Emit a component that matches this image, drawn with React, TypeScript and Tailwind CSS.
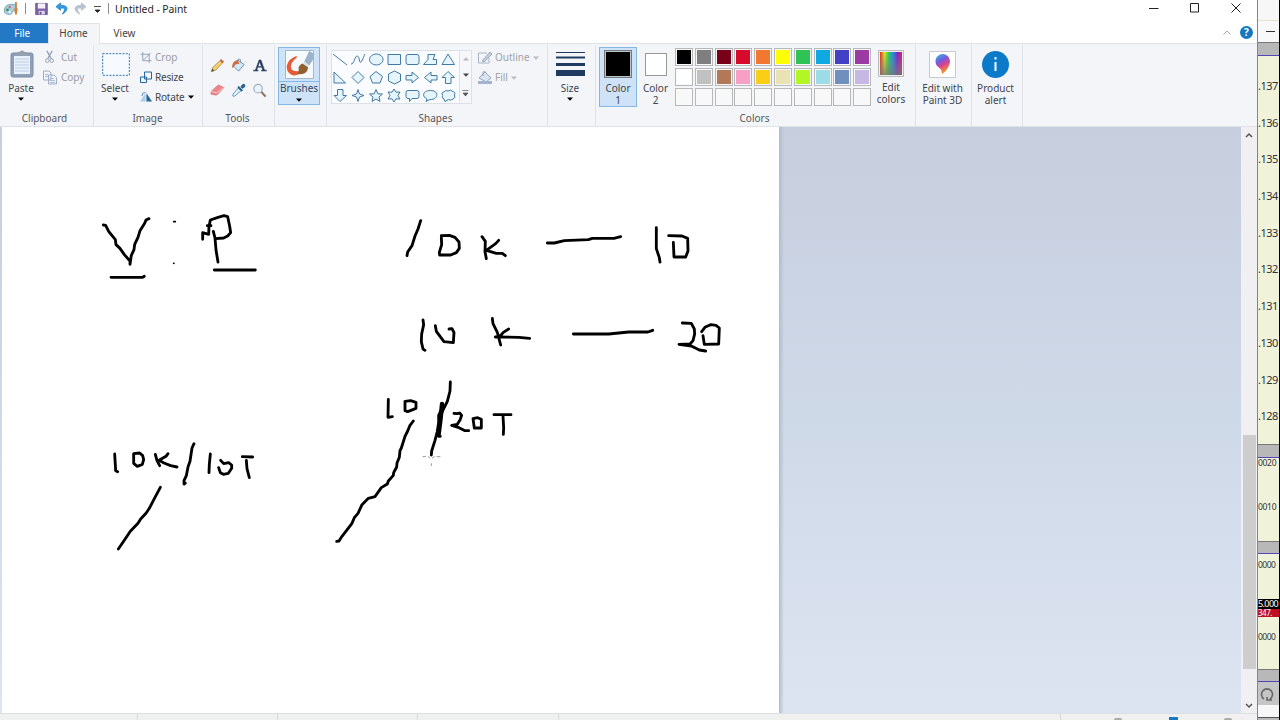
import type { ReactNode } from "react";
import clsx from "clsx";

const PRICES = [".137", ".136", ".135", ".134", ".133", ".132", ".131", ".130", ".129", ".128"];

const SWATCHES = [
  "#000000", "#7f7f7f", "#780018", "#d80a2c", "#f0782f", "#fdfd05", "#2fc356", "#10a8e0", "#4340c6", "#9a3aa2",
  "#ffffff", "#c1c1c1", "#b27857", "#f79fc4", "#f9cf16", "#e9e3b4", "#b2f725", "#9cdce6", "#6f90bd", "#c5b9e4",
  "", "", "", "", "", "", "", "", "", "",
];

const SHAPES = [
  "M1 3L15 14",
  "M1 13C4 14 5 4 7.5 5S9 13 11 11S14 4 15 3",
  "M1.5 8.5a6.8 5.5 0 1 0 13.6 0a6.8 5.5 0 1 0 -13.6 0Z",
  "M2 3.5H14.5V13.5H2Z",
  "M4 3.5H13Q15 3.5 15 5.5V11.5Q15 13.5 13 13.5H4Q2 13.5 2 11.5V5.5Q2 3.5 4 3.5Z",
  "M6 3.5H13L11 8.5H14.5V13.5H1.5L6 8.5Z",
  "M8 3L14.5 13.5H2Z",
  "M2 3V14H13.5Z",
  "M8 2.5L14 8.5L8 14.5L2 8.5Z",
  "M8 2.5L14.5 7.5L12 14H4.5L2 7.5Z",
  "M8.5 2L14.5 5V12L8.5 15L2.5 12V5Z",
  "M2 6.5H8V3L14.5 8.5L8 14V11H2Z",
  "M15 6.5H9V3L2.5 8.5L9 14V11H15Z",
  "M5.5 14.5V8.5H2L8 2.5L14.5 8.5H11V14.5Z",
  "M5.5 2.5V8.5H2L8 14.5L14.5 8.5H11V2.5Z",
  "M8 2.5L9.5 7L14 8.5L9.5 10L8 14.5L6.5 10L2 8.5L6.5 7Z",
  "M8 2.5L9.8 6.8L14.5 7L11 10L12 14.5L8 12L4 14.5L5 10L1.5 7L6.2 6.8Z",
  "M8 2L10 5.2L14 5L12 8.5L14 12L10 11.8L8 15L6 11.8L2 12L4 8.5L2 5L6 5.2Z",
  "M4 3.5H13Q15 3.5 15 5.5V9.5Q15 11.5 13 11.5H8L5.5 14.5V11.5H4Q2 11.5 2 9.5V5.5Q2 3.5 4 3.5Z",
  "M5 12L4 14.5L8 12.5C17 13 17 3 8.5 3.5C0 3.5 0 10 5 12Z",
  "M4 12Q1 11 2.5 8.5Q1 5 4 5Q5 2.5 8 4Q11 2 12.5 4.5Q16 5 14.5 8Q16 11 13 12Q11 14 8.5 12.5L5 14.5Z",
];

function Caret({ className }: { className?: string }) {
  return (
    <svg viewBox="0 0 6 4" className={clsx("h-1 w-1.5", className)}>
      <path d="M0 .5H6L3 3.8Z" fill="currentColor" />
    </svg>
  );
}

function Group({ label, className, children }: { label?: string; className: string; children?: ReactNode }) {
  return (
    <section className={clsx("flex h-[81px] shrink-0 flex-col border-r border-[#e0e3e9]", className)}>
      <div className="h-[65px] w-full shrink-0">{children}</div>
      <div className="text-center leading-[16px] text-[#55585d]">{label}</div>
    </section>
  );
}

function TitleBar() {
  return (
    <header className="flex h-[23px] items-start bg-white pt-px">
      <svg viewBox="0 0 18 18" className="ml-[3px] h-[16px] w-[17px]">
        <path d="M1 11C1 5 6 3 12 4C16 5 15 10 12 11C8 12 11 15 7 15C3 15 1 14 1 11Z" fill="#a8cfe0" stroke="#6b9db5" />
        <circle cx="4.500" cy="10" r="1.500" fill="#3f8c59" />
        <circle cx="7" cy="7" r="1.300" fill="#e05b50" />
        <circle cx="7" cy="12.500" r="1.300" fill="#fff" />
        <path d="M14 1V8M13 8L14 15L15 8" stroke="#d4803c" strokeWidth="2" fill="none" />
      </svg>
      <div className="mt-[2px] ml-[5px] h-[11px] w-px bg-[#8c8c8c]" />
      <svg viewBox="0 0 14 14" className="mt-px ml-[9px] h-[14px] w-[13px]">
        <path d="M.8 1H13.200V13H.8Z" fill="#8062a8" stroke="#69528e" />
        <path d="M3 1H11V6.500H3Z" fill="#f3f0f8" />
        <path d="M4 9H10.500V13H4Z" fill="#ded8e8" />
        <path d="M5 10H7V13H5Z" fill="#69528e" />
      </svg>
      <svg viewBox="0 0 14 14" className="ml-[7px] h-[15px] w-[13px]">
        <path d="M6 1L1 5L6 9V6.500H9Q12 7 8 13Q15 9 12 5Q10 3.500 6 3.500Z" fill="#359bdd" stroke="#2c8bd0" />
      </svg>
      <svg viewBox="0 0 14 14" className="ml-[6px] h-[15px] w-[13px]">
        <path d="M8 1L13 5L8 9V6.500H5Q2 7 6 13Q-1 9 2 5Q4 3.500 8 3.500Z" fill="#b7c3d2" stroke="#b7c3d2" />
      </svg>
      <svg viewBox="0 0 7 8" className="mt-[5px] ml-[7px] h-2 w-[7px]">
        <path d="M0 .5H7M1 4H6L3.500 6.500Z" stroke="#222" fill="#222" strokeWidth=".8" />
      </svg>
      <div className="mt-[2px] ml-[7px] h-[11px] w-px bg-[#8c8c8c]" />
      <h1 className="ml-[6px] text-[10.400px] leading-[17px] tracking-[-0.050px] text-[#252525]">Untitled - Paint</h1>
      <div className="mt-[2px] mr-[16px] ml-auto flex items-center gap-[31px] text-[#222]">
        <svg viewBox="0 0 10 10" className="h-[10px] w-[10px]"><path d="M0 5.500H9.500" stroke="currentColor" /></svg>
        <svg viewBox="0 0 10 10" className="h-[10px] w-[10px]"><path d="M.5 .5H8.500V9H.5Z" stroke="currentColor" fill="none" /></svg>
        <svg viewBox="0 0 10 10" className="h-[10px] w-[10px]"><path d="M.5 .5L9.500 9.500M9.500 .5L.5 9.500" stroke="currentColor" /></svg>
      </div>
    </header>
  );
}

function Tabs() {
  return (
    <nav className="flex h-[20px] bg-white text-[#454545]">
      <div className="w-[47.500px] bg-[#2379c5] pr-[3px] text-center leading-[20px] text-white">File</div>
      <div className="relative h-[21px] w-[52px] border-x border-t border-[#e0e3e9] bg-[#f4f5f8] text-center leading-[19px]">Home</div>
      <div className="w-[50px] text-center leading-[20px]">View</div>
      <svg viewBox="0 0 8 5" className="mt-[7px] ml-auto h-[5px] w-2"><path d="M.5 4.500L4 1L7.500 4.500" stroke="#aaa" fill="none" /></svg>
      <div className="mt-[3px] mr-[4px] ml-[9px] h-[13px] w-[13px] rounded-full bg-[#1677c0] text-center text-[10px] leading-[13px] font-bold text-white">?</div>
    </nav>
  );
}

function Clipboard() {
  return (
    <div className="flex h-full">
      <div className="flex w-[42px] flex-col items-center pt-[5px]">
        <svg viewBox="0 0 24 28" className="ml-[2px] h-[28px] w-[24px]">
          <rect x="1" y="3" width="22" height="24" rx="2" fill="#8f9fba" stroke="#7c8da9" />
          <path d="M4 6H20V24H4Z" fill="#e9f1fa" />
          <path d="M5 9H19M5 12H19M5 15H19M5 18H19M5 21H19" stroke="#b9cde6" />
          <path d="M7 2H9Q12 -1 15 2H17V6H7Z" fill="#98a1ae" />
        </svg>
        <span className="mt-[4px] leading-[13px]">Paste</span>
        <Caret className="mt-[2px] text-black" />
      </div>
      <div className="pt-[2px] text-[#9a9ca4]">
        <div className="flex h-[20px] items-center gap-[7px] pl-[3px]">
          <svg viewBox="0 0 10 14" className="h-[14px] w-[9px]">
            <path d="M2 0L7 9M8 0L3 9" stroke="#8f9bb0" strokeWidth="1.400" />
            <circle cx="2.500" cy="11" r="2" fill="none" stroke="#8f9bb0" /><circle cx="7.500" cy="11" r="2" fill="none" stroke="#8f9bb0" />
          </svg>
          Cut
        </div>
        <div className="flex h-[20px] items-center gap-[4px] pl-px">
          <svg viewBox="0 0 14 14" className="h-[15px] w-[14px]">
            <path d="M.5 .5H6L8 2.500V9.500H.5ZM5.500 4.500H11L13.500 7V13.500H5.500Z" fill="#f1f5fb" stroke="#9eaec8" />
            <path d="M2 4H5M2 6H5M7 8H11M7 10H12M7 12H12" stroke="#aebdd4" />
          </svg>
          Copy
        </div>
      </div>
    </div>
  );
}

function ImageTools() {
  return (
    <div className="flex h-full">
      <div className="flex w-[42px] flex-col items-center pt-[8px]">
        <svg viewBox="0 0 28 23" className="ml-[2px] h-[23px] w-[28px]"><rect x=".7" y=".7" width="26.600" height="21.600" fill="#f7fbff" stroke="#2f73b0" strokeDasharray="2 1.300" /></svg>
        <span className="mt-[6px] leading-[13px]">Select</span>
        <Caret className="mt-[2px] text-black" />
      </div>
      <div className="pt-[2px] pl-[4px]">
        <div className="flex h-[20px] items-center gap-[3px] text-[#9a9ca4]">
          <svg viewBox="0 0 12 12" className="h-[11px] w-[12px]"><path d="M2.500 0V9.500H12M0 2.500H9.500V12M3 9L11 1" stroke="#8d9db8" fill="none" /></svg>
          Crop
        </div>
        <div className="flex h-[20px] items-center gap-[3px] tracking-[-0.200px]">
          <svg viewBox="0 0 12 12" className="h-[12px] w-[12px]"><path d="M4.500 1H11.500V8H4.500ZM.5 6H6.500V11.500H.5Z" stroke="#27649c" fill="#eff7fd" /></svg>
          Resize
        </div>
        <div className="flex h-[20px] items-center gap-[3px] tracking-[-0.200px]">
          <svg viewBox="0 0 13 12" className="h-[12px] w-[12px]"><path d="M0 11H6V2Z" fill="#a6cdeb" /><path d="M7 2V11H13Z" fill="#276593" /><path d="M2 5Q2 1 6 1" stroke="#4382b4" fill="none" /></svg>
          Rotate
          <Caret className="text-black" />
        </div>
      </div>
    </div>
  );
}

function Tools() {
  return (
    <div className="grid grid-cols-[21px_21px_21px] grid-rows-[25px_25px] place-items-center pt-[8px] pl-[4px]">
      <svg viewBox="0 0 16 16" className="h-[15px] w-[15px]"><path d="M1.500 14.500L3 10L12 1.500L14.500 4L6 13Z" fill="#f5d06a" stroke="#9b7941" strokeWidth=".8" /><path d="M12 1.500L14.500 4L13 5.500L10.500 3Z" fill="#c5664d" /><path d="M1.500 14.500L2.500 11.500L4.500 13.500Z" fill="#444" /></svg>
      <svg viewBox="0 0 16 16" className="h-[15px] w-[15px]"><path d="M7 2L14 7L8 14L3 9Z" fill="#d5eaf7" stroke="#648eac" /><path d="M7 2Q1 3 1 11Q4 9 4 7L9 6Z" fill="#d16b43" /><path d="M10 5V1.500Q8 0 7 3" stroke="#7598b0" fill="none" /></svg>
      <svg viewBox="0 0 14 14" className="h-[13px] w-[14px]"><path d="M6 1H8L12 12H14V13H8.500V12H10L9 9H4.500L3.500 12H5V13H0V12H2ZM4.900 8H8.500L6.600 3Z" fill="#22395b" stroke="#22395b" strokeWidth=".5" fillRule="evenodd" /></svg>
      <svg viewBox="0 0 16 14" className="h-[13px] w-[15px]"><path d="M1 8L9 1L15 4L7 12L1 11Z" fill="#ed858c" stroke="#c96d74" strokeWidth=".7" /><path d="M1 8L7 9.500L15 4" stroke="#ffd0d1" fill="none" /></svg>
      <svg viewBox="0 0 16 16" className="h-[15px] w-[15px]"><path d="M8 5L11 8L4 14L2 14L2 12Z" fill="#dceefb" stroke="#6e97b5" /><path d="M8 3L13 8L11 9L7 5ZM10 4L12 1.500Q14 0 15 2Q16 3 14 5L12 6Z" fill="#286291" /></svg>
      <svg viewBox="0 0 16 16" className="h-[15px] w-[15px]"><circle cx="6.500" cy="6" r="4.500" fill="#e8f5ff" stroke="#a5afb9" strokeWidth="1.300" /><path d="M10 9.500L14.500 14.500" stroke="#8d7256" strokeWidth="2.200" /></svg>
    </div>
  );
}

function BrushButton() {
  return (
    <div className="mt-[2px] ml-[3px] flex h-[58px] w-[42px] flex-col items-center border border-[#85b7e5] bg-[#cfe3f8]">
      <svg viewBox="0 0 30 30" className="mt-[2px] h-[29px] w-[29px]">
        <path d="M.5 .5H29.500V29.500H.5Z" fill="#f6fafd" stroke="#a1b4c7" />
        <path d="M12 7C1 11 0 21 7 25Q11 27 17 22Q9 24 6 20Q3 14 12 7Z" fill="#e65b36" stroke="#e65b36" strokeWidth="1.500" />
        <path d="M20 12L25 1L29 3V10L25 16Z" fill="#9cb4c9" />
        <path d="M20 12L25 16L23 19L18 15Z" fill="#d6e2ea" />
        <path d="M18 14L24 18Q23 26 12 25Q15 23 14 19Q14 16 18 14Z" fill="#91602f" />
      </svg>
      <div className="mt-[2px] w-full border-t border-[#85b7e5] text-center leading-[12px] text-[#34465d]">Brushes</div>
      <Caret className="mt-[4px] text-black" />
    </div>
  );
}

function ShapeTools() {
  return (
    <div className="flex pt-[5px] pl-[4px]">
      <div className="flex h-[54px] w-[141px] border border-[#dce1e8] bg-[#fafcff]">
        <div className="grid grid-cols-[repeat(7,18px)] grid-rows-[repeat(3,18px)]">
          {SHAPES.map((d, i) => (
            <svg key={i} viewBox="0 0 17 17" className="h-[17px] w-[17px]">
              <path d={d} fill={i < 2 ? "none" : "#e6f4fc"} stroke="#417aa5" strokeWidth="1" />
            </svg>
          ))}
        </div>
        <div className="ml-[1px] flex flex-1 flex-col items-center justify-around border-l border-[#dce1e8] bg-[#f6f7fa]">
          <Caret className="rotate-180 text-[#b5b8bf]" />
          <Caret className="text-[#444]" />
          <svg viewBox="0 0 7 7" className="h-[7px] w-[7px]"><path d="M.5 .5H6.500M1 3H6L3.500 6Z" stroke="#555" fill="#555" strokeWidth=".7" /></svg>
        </div>
      </div>
      <div className="pl-[6px] text-[#a0a3ab]">
        <div className="flex h-[15px] items-center gap-[3px]">
          <svg viewBox="0 0 14 12" className="h-[12px] w-[14px]"><path d="M11 6V11H.5V1H9" fill="none" stroke="#a7b2c4" /><path d="M4 9L12 0L14 2L6 10Z" fill="#c6cedc" stroke="#9ba9be" /></svg>
          Outline
          <Caret className="text-[#b6b9c0]" />
        </div>
        <div className="mt-[3px] flex h-[19px] items-center gap-[3px]">
          <svg viewBox="0 0 14 13" className="h-[13px] w-[14px]"><path d="M1 7L7 1L13 7L8 11Z" fill="#dae4f0" stroke="#96a6bf" /><path d="M0 10H14V13H0Z" fill="#a5b4ce" /><path d="M5 5V1Q7 -1 8 2" fill="none" stroke="#96a6bf" /></svg>
          Fill
          <Caret className="text-[#b6b9c0]" />
        </div>
      </div>
    </div>
  );
}

function ColorTools() {
  return (
    <div className="flex h-full pt-[2px] pl-[3px]">
      <div className="flex h-[60px] w-[38px] flex-col items-center border border-[#85b7e5] bg-[#cfe3f8] pt-[2px] text-center leading-[12px]">
        <div className="h-[29px] w-[28px] border border-[#777] bg-[#b8c4d0] p-px"><div className="h-full bg-black" /></div>
        <span className="mt-[4px]">Color</span>
        <span>1</span>
      </div>
      <div className="flex w-[37px] flex-col items-center pt-[6px] text-center leading-[12px]">
        <div className="h-[23px] w-[22px] border border-[#999] bg-white" />
        <span className="mt-[6px]">Color</span>
        <span>2</span>
      </div>
      <div className="ml-[1px] grid h-[58px] grid-cols-[repeat(10,17.800px)] grid-rows-[repeat(3,18px)] gap-x-[2px] gap-y-[2px] pt-px">
        {SWATCHES.map((color, i) => (
          <div key={i} className="h-[18px] w-[18px] border border-[#b7b8ba] bg-[#f8f8f9] p-px">
            <div className="h-full w-full" style={{ backgroundColor: color || undefined }} />
          </div>
        ))}
      </div>
      <div className="ml-[2px] flex w-[36px] flex-col items-center pt-[3px] text-center leading-[12px]">
        <svg viewBox="0 0 26 27" className="h-[27px] w-[26px]">
          <defs>
            <linearGradient id="spectrum"><stop stopColor="#ef2020" /><stop offset=".2" stopColor="#d5e91c" /><stop offset=".4" stopColor="#20cc65" /><stop offset=".6" stopColor="#218ae0" /><stop offset=".78" stopColor="#7d20cf" /><stop offset="1" stopColor="#e01864" /></linearGradient>
            <linearGradient id="spectrum-fade" x2="0" y2="1"><stop stopColor="#888" stopOpacity="0" /><stop offset="1" stopColor="#777" stopOpacity=".8" /></linearGradient>
          </defs>
          <path d="M.5 .5H25.500V26.500H.5Z" fill="#eee" stroke="#bbb" />
          <path d="M2 2H24V25H2Z" fill="url(#spectrum)" /><path d="M2 2H24V25H2Z" fill="url(#spectrum-fade)" />
        </svg>
        <span className="mt-[4px]">Edit<br />colors</span>
      </div>
    </div>
  );
}

function Ribbon() {
  return (
    <div className="flex h-[84px] border-y border-[#dfe2e7] bg-[#f4f5f8] pt-px text-[#42454c]">
      <Group label="Clipboard" className="w-[94px] pr-[4px]"><Clipboard /></Group>
      <Group label="Image" className="w-[109px] pr-px"><ImageTools /></Group>
      <Group label="Tools" className="w-[72px] pr-[2px]"><Tools /></Group>
      <Group className="w-[52px]"><BrushButton /></Group>
      <Group label="Shapes" className="w-[221px] pr-[3px]"><ShapeTools /></Group>
      <Group className="w-[48px]">
        <div className="flex flex-col items-center pt-[6px] pr-[3px]">
          <svg viewBox="0 0 29 26" className="h-[26px] w-[29px]"><path d="M0 1.500H29M0 6.500H29M0 13.500H29M0 22H29" stroke="#203b5f" /><path d="M0 6.500H29" stroke="#203b5f" strokeWidth="2" /><path d="M0 13.500H29" stroke="#203b5f" strokeWidth="3" /><path d="M0 22H29" stroke="#203b5f" strokeWidth="6" /></svg>
          <span className="mt-[5px] leading-[13px]">Size</span>
          <Caret className="mt-[2px] text-black" />
        </div>
      </Group>
      <Group label="Colors" className="w-[320px] pr-[2px]"><ColorTools /></Group>
      <Group className="w-[56px]">
        <div className="flex flex-col items-center pt-[6px] pr-[2px] text-center leading-[12px]">
          <svg viewBox="0 0 27 27" className="h-[27px] w-[27px]">
            <defs><linearGradient id="pin" x2=".4" y2="1"><stop stopColor="#28c4e9" /><stop offset=".4" stopColor="#745bdd" /><stop offset=".65" stopColor="#d9418f" /><stop offset="1" stopColor="#f59a26" /></linearGradient></defs>
            <path d="M.5 .5H26.500V26.500H.5Z" fill="white" stroke="#c7c9cf" />
            <path d="M13.500 3A7.300 7.300 0 0 0 7 13C8 17 13 16 13 23C17 21 21 15 21 10A7.300 7.300 0 0 0 13.500 3Z" fill="url(#pin)" />
          </svg>
          <span className="mt-[4px] whitespace-nowrap">Edit with<br />Paint 3D</span>
        </div>
      </Group>
      <Group className="w-[51px]">
        <div className="flex flex-col items-center pt-[6px] pr-[3px] text-center leading-[12px]">
          <svg viewBox="0 0 27 27" className="h-[27px] w-[27px]"><circle cx="13.500" cy="13.500" r="13.500" fill="#0b7bc9" /><path d="M13.500 11V20M13.500 6V8.500" stroke="white" strokeWidth="2" /></svg>
          <span className="mt-[4px]">Product<br />alert</span>
        </div>
      </Group>
    </div>
  );
}

function Drawing() {
  return (
    <svg viewBox="2 127 777 586" className="h-[586px] w-[777px] shrink-0 bg-white" fill="none" stroke="black" strokeLinecap="round" strokeLinejoin="round">
      {/* V : P */}
      <g transform="translate(90 200) scale(.33333)" strokeWidth="8.500">
        <path d="M40 75L47 76L56 94L76 119L78 134L90 145L103 164L120 183V193L124 166L132 149L134 133L144 112L150 92L164 70L168 60L177 56" />
        <path d="M63 232H158L163 229" />
        <path d="M251 65H256M251 190H252" strokeWidth="5" />
        <path d="M338 118V98L356 103L357 80L361 60L384 52L402 47L413 50L419 79L422 98L413 108L401 114L377 116M352 77H363M370 94L375 114L378 150L384 186M373 210H496" />
      </g>
      {/* First two rows of notes */}
      <g transform="translate(390 200) scale(.33333)" strokeWidth="8.500">
        <path d="M92 62L84 87L75 108L66 137L53 156L51 167M154 112L155 134L148 157L149 165H182L199 158L208 145L207 126L195 112L178 106L154 107M276 110L286 124L285 155L289 176M326 121L317 131L289 151L319 160H337L346 167M472 129H493L523 122L595 119L607 115H672L692 110M799 83V146L808 173L810 186M836 107L876 108L893 115L894 153L887 171H852L850 127" />
        <path d="M99 360L101 374L95 402L94 425L99 447L105 451M136 377L139 394L153 413L162 425L190 428L192 398L186 386L177 387M307 355L309 371L322 397L332 435M356 387L340 397L328 411M316 411L387 412L419 415M550 402H656L716 396H774L788 391M877 369L904 370L913 387L914 402L909 422L900 432L867 433L904 438L928 450L947 453M935 395L946 381L963 374L978 376L988 384L986 432L943 433L939 407" />
      </g>
      {/* Volume arrows */}
      <g transform="translate(320 370) scale(.33333)" strokeWidth="8.500">
        <path d="M205 88L204 142L217 140M255 94V122L263 125L288 115V97L272 92L255 94M280 153L270 166L263 183L255 199L244 234L240 242L238 262L231 279L230 291L221 308L220 316L205 333L202 342L184 353L165 380L145 385L126 404L114 430L103 443L96 460L66 499L57 513L50 514" />
        <path d="M391 36L390 63L382 94L369 120L357 151L352 184L345 211L335 243L334 255M366 101V115L356 136V199H361M402 130L411 131L419 129L425 136L420 150L412 163L395 166L417 173L435 182H446M459 146L463 174H484V148L473 143L459 146M522 134H573M549 138L551 172L550 193" />
        <path d="M366 102L362 145L356 193" strokeWidth="13" />
        <path d="M309 260H317M325 260L330 264M337 264L343 260M351 260H360M334 281V287" strokeWidth="3" stroke="#999" />
      </g>
      <g transform="translate(100 430) scale(.33333)" strokeWidth="8.500">
        <path d="M44 72L47 122L53 125M101 72V100L112 109L127 103L131 89L128 77L119 69L101 71M166 73L171 92L179 107M204 71L198 79L177 91L192 99L212 107L231 111M282 41L276 54L270 94L264 111L259 137L252 152V162L256 159M331 72L328 103L327 128M356 113L361 128L370 133L385 130L395 115V105L386 98L371 101L362 91M427 80L458 81M439 91L441 116L448 143M181 172L163 206L148 235L138 250L122 267L114 280L91 304L75 328L55 357" />
      </g>
    </svg>
  );
}

function Workspace() {
  return (
    <main className="flex h-[586px] bg-linear-to-b from-[#c7cede] via-[#ced9e8] to-[#dde4f1] pl-[2px]">
      <Drawing />
      <div className="w-[5px] bg-linear-to-r from-[#aebdce] to-transparent" />
      <div className="ml-auto flex w-[16px] flex-col items-center bg-[#f0f0f2]">
        <svg viewBox="0 0 8 6" className="mt-[5px] h-[6px] w-2"><path d="M1 5L4 2L7 5" stroke="#555" strokeWidth="1.500" fill="none" /></svg>
        <div className="mt-[297px] h-[234px] w-[13px] bg-[#cdcdcd]" />
        <svg viewBox="0 0 8 6" className="mt-[34px] h-[6px] w-2"><path d="M1 1L4 4L7 1" stroke="#555" strokeWidth="1.500" fill="none" /></svg>
      </div>
    </main>
  );
}

function StatusBar() {
  return (
    <footer className="flex h-[7px] items-end border-t border-[#dce0e5] bg-[#f0f0f0]">
      <div className="h-full w-[138px] border-r border-[#d9d9d9]" />
      <div className="h-full w-[140px] border-r border-[#d9d9d9]" />
      <div className="h-full w-[140px] border-r border-[#d9d9d9]" />
      <div className="h-full w-[141px] border-r border-[#d9d9d9]" />
      <div className="h-full w-[502px] border-r border-[#d9d9d9]" />
      <div className="ml-[53px] h-[2px] w-[8px] rounded-t-full bg-[#aaa]" />
      <div className="ml-[47px] h-[3px] w-[9px] bg-[#1878c5]" />
      <div className="ml-[46px] h-[2px] w-[8px] rounded-t-full bg-[#aaa]" />
    </footer>
  );
}

/* Edge of the charting window behind Paint */
function ChartEdge() {
  return (
    <aside className="flex w-[22px] flex-col border-r border-black bg-[#f0f2da] font-['Noto_Sans','Open_Sans',sans-serif] text-[#333]">
      <div className="h-[21px] border-b border-[#e8e3cd] bg-[#f7f7f7]" />
      <div className="flex h-[21px] items-center justify-center bg-[#f9f9f9] pl-[3px]"><div className="h-px w-[9px] bg-[#333]" /></div>
      <div className="h-[14px] border-t border-b border-t-[#777] border-b-[#5446ba] bg-[#b9b8b8]" />
      <div className="h-[388px] pt-[12px] text-[11px]">
        {PRICES.map((price) => <div key={price} className="h-[36.700px] leading-[36px] tracking-[-0.500px]">{price}</div>)}
      </div>
      <div className="h-[14px] border-t border-b border-t-[#777] border-b-[#5446ba] bg-[#b9b8b8]" />
      <div className="h-[83px] text-[8.500px] leading-[10px] tracking-[-0.300px]">
        <div className="h-[44px]">0020</div>
        <div>0010</div>
      </div>
      <div className="h-[13px] border-t border-b border-t-[#777] border-b-[#5446ba] bg-[#b9b8b8]" />
      <div className="flex h-[115px] flex-col pt-[6px] text-[8.500px] leading-[10px] tracking-[-0.500px]">
        <div className="h-[39px]">0000</div>
        <div className="h-[10px] bg-black text-[9px] leading-[9px] tracking-[-0.600px] text-white">5.000</div>
        <div className="h-[8px] bg-[#bd1024] text-[8px] leading-[8px] text-white">347.</div>
        <div className="mt-[15px]">0000</div>
      </div>
      <div className="h-[13px] border-t border-b border-t-[#777] border-b-[#5446ba] bg-[#b9b8b8]" />
      <div className="flex h-[23px] items-center justify-center bg-[#c5c5c5] pr-[4px]">
        <svg viewBox="0 0 14 14" className="h-[14px] w-[14px]"><path d="M4 12A5.500 5.500 0 1 1 10 12M7 10V13H12" fill="none" stroke="#666" strokeWidth="1.600" /></svg>
      </div>
      <div className="h-[12px] bg-[#f7f7f7]" />
      <div className="flex-1 border-t border-[#555] bg-[#bbb]" />
    </aside>
  );
}

export default function App() {
  return (
    <div className="flex h-[720px] w-[1280px] overflow-hidden bg-white font-['Noto_Sans','Open_Sans',sans-serif] text-[10px]">
      <div className="flex w-[1258px] shrink-0 flex-col border-r border-[#668ca6]">
        <TitleBar />
        <Tabs />
        <Ribbon />
        <Workspace />
        <StatusBar />
      </div>
      <ChartEdge />
    </div>
  );
}
